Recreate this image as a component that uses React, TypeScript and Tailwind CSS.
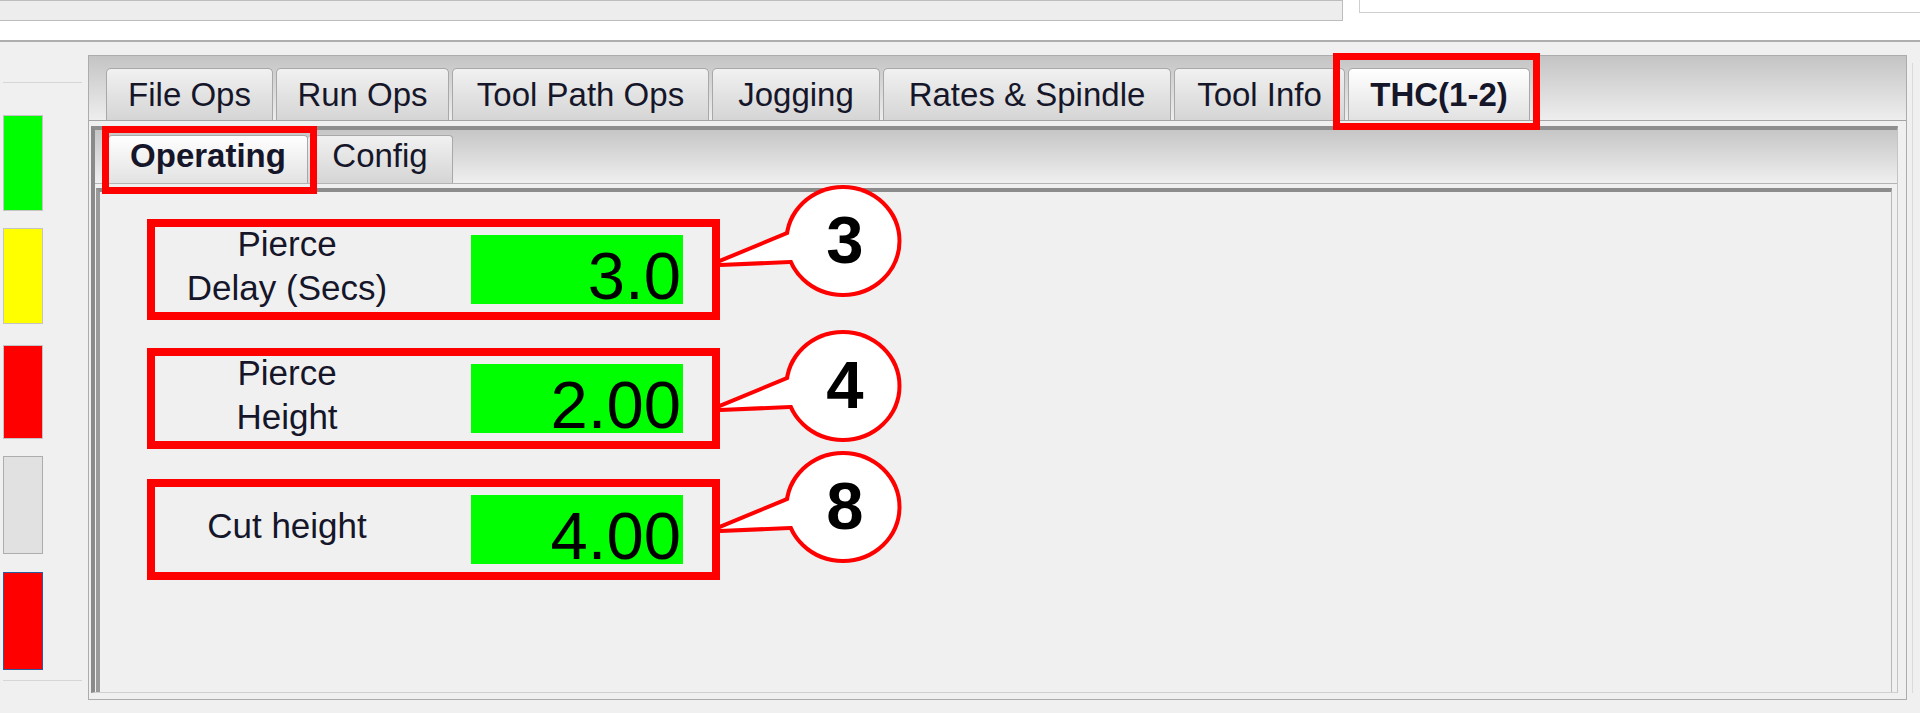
import React from "react";

type TabDef = { label: string; w: string; selected?: boolean };

const tabs: TabDef[] = [
  { label: "File Ops", w: "w-[167px]" },
  { label: "Run Ops", w: "w-[173px]" },
  { label: "Tool Path Ops", w: "w-[257px]" },
  { label: "Jogging", w: "w-[168px]" },
  { label: "Rates & Spindle", w: "w-[288px]" },
  { label: "Tool Info", w: "w-[171px]" },
  { label: "THC(1-2)", w: "w-[182px]", selected: true },
];

function Tab({ t }: { t: TabDef }) {
  return (
    <div
      className={`${t.w} ${
        t.selected
          ? "bg-linear-to-b from-white to-[#e2e2e2] font-bold"
          : "bg-linear-to-b from-[#f1f1f1] to-[#d5d5d5]"
      } h-[52px] shrink-0 flex items-center justify-center rounded-t-[5px] border border-b-0 border-[#a8a8a8] text-[33px] leading-none text-[#16162a]`}
    >
      {t.label}
    </div>
  );
}

function Callout({ num, top }: { num: string; top: string }) {
  const tail = "M13 92 L95 58 L95 88.5 Z";
  return (
    <svg
      className={`absolute left-[560px] ${top}`}
      width="230"
      height="150"
      viewBox="0 0 230 150"
    >
      <path d={tail} fill="#fff" stroke="#ff0000" strokeWidth="8" strokeLinejoin="miter" />
      <ellipse cx="136" cy="70" rx="54.5" ry="52" fill="#fff" stroke="#ff0000" strokeWidth="8" />
      <path d={tail} fill="#fff" />
      <ellipse cx="136" cy="70" rx="54.5" ry="52" fill="#fff" />
      <text
        x="138"
        y="92"
        textAnchor="middle"
        fontSize="67"
        fontWeight="bold"
        fontFamily="'Liberation Sans', Arial, sans-serif"
        fill="#000"
      >
        {num}
      </text>
    </svg>
  );
}

function Field({
  lines,
  value,
  num,
  calloutTop,
  mt,
}: {
  lines: string[];
  value: string;
  num: string;
  calloutTop: string;
  mt: string;
}) {
  return (
    <div className={`relative w-[573px] h-[101px] ${mt}`}>
      <div className="w-full h-full border-[8px] border-[#ff0000] flex items-center">
        <div className="w-[264px] -mt-[8px] text-center text-[35px] leading-[44px] text-[#16162a]">
          {lines.map((l) => (
            <div key={l}>{l}</div>
          ))}
        </div>
        <div className="ml-[52px] w-[212px] h-[69px] bg-[#00ff00] text-right pr-[2px] pt-[12px] text-[67px] leading-[57px] text-black">
          {value}
        </div>
      </div>
      <Callout num={num} top={calloutTop} />
    </div>
  );
}

export default function App() {
  return (
    <div className="w-[1920px] h-[713px] overflow-hidden bg-[#f0f0f0] font-['Liberation_Sans',Arial,sans-serif]">
      {/* top strip */}
      <div className="h-[42px] bg-white border-b-2 border-[#aeaeae] flex items-start">
        <div className="w-[1343px] h-[21px] bg-[#ededed] border-t border-b border-r border-[#bdbdbd]" />
        <div className="ml-[16px] flex-1 h-[13px] bg-white border-l border-b border-[#cfcfcf]" />
      </div>

      {/* main row */}
      <div className="flex items-start">
        {/* left column */}
        <div className="w-[88px] shrink-0 flex flex-col">
          <div className="mt-[40px] ml-[3px] w-[79px] h-px bg-[#d6d6d6]" />
          <div className="mt-[32px] ml-[3px] w-[40px] h-[96px] bg-[#00ff00] border border-[#c4c4c4]" />
          <div className="mt-[17px] ml-[3px] w-[40px] h-[96px] bg-[#ffff00] border border-[#c4c4c4]" />
          <div className="mt-[21px] ml-[3px] w-[40px] h-[94px] bg-[#ff0000] border border-[#c4c4c4]" />
          <div className="mt-[17px] ml-[3px] w-[40px] h-[98px] bg-[#e1e1e1] border border-[#adadad]" />
          <div className="mt-[18px] ml-[3px] w-[40px] h-[98px] bg-[#ff0000] border border-[#2c5aa0]" />
          <div className="mt-[10px] ml-[3px] w-[79px] h-px bg-[#d6d6d6]" />
        </div>

        {/* tab panel */}
        <div className="relative mt-[13px] w-[1819px] h-[645px] shrink-0 border border-[#acacac] flex flex-col bg-[#f0f0f0]">
          {/* main tab header */}
          <div className="h-[65px] shrink-0 pl-[17px] flex items-end gap-[3px] bg-linear-to-b from-[#c4c4c4] to-[#eeeeee] border-b border-[#a4a4a4]">
            {tabs.map((t) => (
              <Tab key={t.label} t={t} />
            ))}
          </div>

          {/* body */}
          <div className="flex-1 pt-[5px] pl-[2px] pr-[8px] pb-[6px] flex flex-col">
            <div className="flex-1 flex flex-col border-t-[4px] border-l-[4px] border-t-[#8e8e8e] border-l-[#8a8a8a] border-r border-b border-r-[#c4c4c4] border-b-[#d0d0d0]">
              {/* sub tab header */}
              <div className="h-[54px] shrink-0 pl-[13px] flex items-end bg-linear-to-b from-[#c6c6c6] to-[#efefef] border-b border-[#b4b4b4]">
                <div className="w-[200px] h-[48px] pb-[8px] flex items-center justify-center rounded-t-[4px] border border-b-0 border-[#a8a8a8] bg-linear-to-b from-white to-[#e2e2e2] text-[33px] leading-none font-bold text-[#16162a]">
                  Operating
                </div>
                <div className="w-[145px] h-[48px] pb-[8px] flex items-center justify-center rounded-t-[4px] border border-b-0 border-l-0 border-[#a8a8a8] bg-linear-to-b from-[#f1f1f1] to-[#d5d5d5] text-[33px] leading-none text-[#16162a]">
                  Config
                </div>
              </div>

              {/* content */}
              <div className="flex-1 mt-[4px] ml-[1px] mr-[5px] border-t-[4px] border-l-[4px] border-t-[#8c8c8c] border-l-[#9a9a9a] border-r border-r-[#b8b8b8] bg-[#f0f0f0] pl-[47px] pt-[27px] flex flex-col">
                <Field
                  lines={["Pierce", "Delay (Secs)"]}
                  value="3.0"
                  num="3"
                  calloutTop="top-[-48px]"
                  mt="mt-0"
                />
                <Field
                  lines={["Pierce", "Height"]}
                  value="2.00"
                  num="4"
                  calloutTop="top-[-32px]"
                  mt="mt-[28px]"
                />
                <Field
                  lines={["Cut height"]}
                  value="4.00"
                  num="8"
                  calloutTop="top-[-42px]"
                  mt="mt-[30px]"
                />
              </div>
            </div>
          </div>

          {/* annotation boxes */}
          <div className="absolute left-[1244px] top-[-3px] w-[207px] h-[77px] border-[7px] border-[#ff0000]" />
          <div className="absolute left-[13px] top-[70px] w-[215px] h-[68px] border-[7px] border-[#ff0000]" />
        </div>

        {/* right edge */}
        <div className="ml-[5px] mt-[21px] h-[630px] w-px bg-[#dadada]" />
      </div>
    </div>
  );
}
